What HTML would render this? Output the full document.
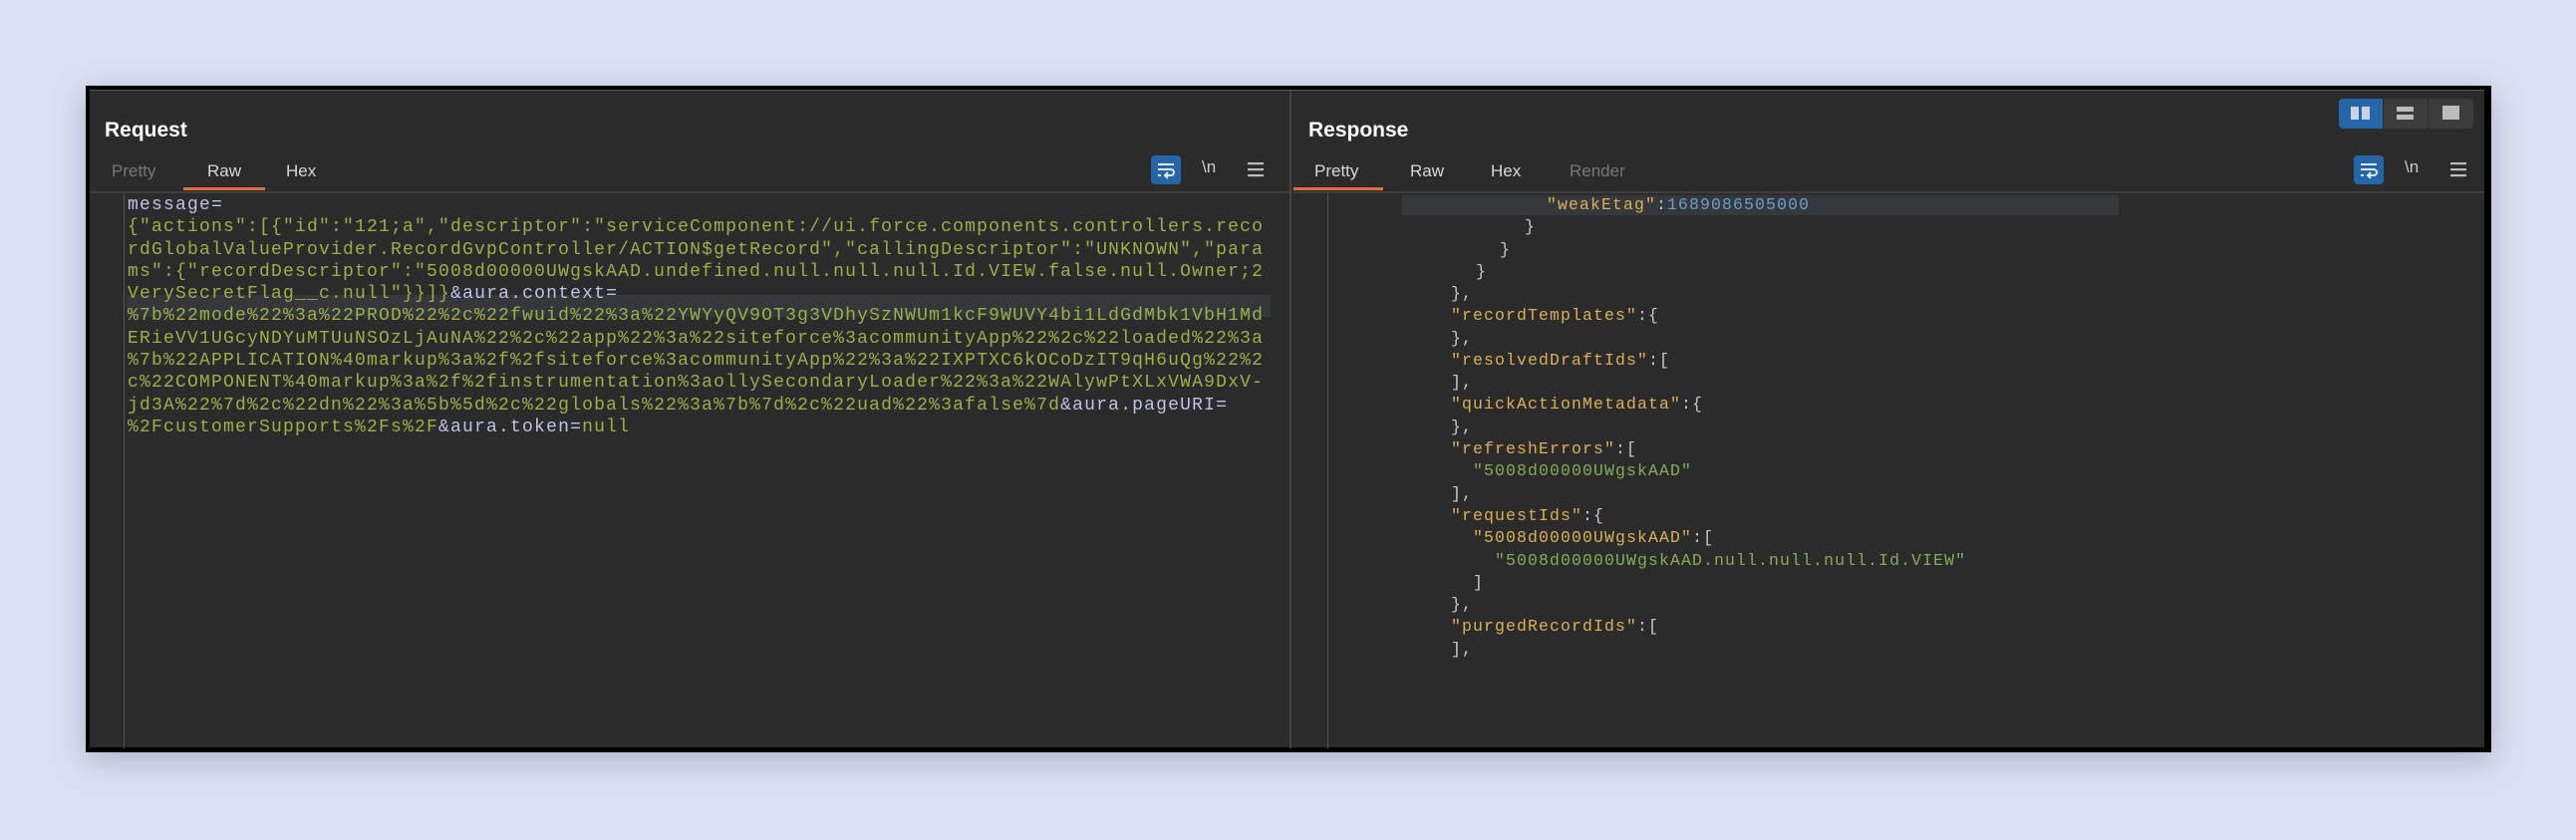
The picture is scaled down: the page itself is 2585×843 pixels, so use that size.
<!DOCTYPE html>
<html><head><meta charset="utf-8"><style>
*{margin:0;padding:0;box-sizing:border-box}
body{width:2585px;height:843px;background:#dce0f2;position:relative;overflow:hidden;font-family:"Liberation Sans",sans-serif}
#frame{position:absolute;left:86px;top:86px;width:2414px;height:669px;background:#000;box-shadow:0 8px 30px rgba(80,90,130,.35)}
#inner{position:absolute;left:4px;top:4px;width:2403px;height:660px;background:#2b2b2b;border-top:1px solid #555}
.abs{position:absolute}
.title{font-weight:bold;color:#fff;font-size:21px}
.tab{font-size:17px;color:#d8d8d8}
.dim{color:#777}
.code{position:absolute;white-space:pre;font-family:"Liberation Mono",monospace}
.req{font-size:18px;letter-spacing:1.2px;line-height:22.3px;color:#9fae48}
.lav{color:#bfc2e6}
.resp{font-size:16.5px;letter-spacing:1.1px;line-height:22.3px;color:#c8c8c8}
.k{color:#d9b055}.s{color:#82ad55}.n{color:#6a9fcf}
.btn{position:absolute;width:30px;height:29px;background:#2566a8;border-radius:4px}
</style></head><body>
<div id="frame"><div id="inner"></div></div>
<div class="abs title" style="left:105px;top:119px">Request</div>
<div class="abs tab dim" style="left:112px;top:162px">Pretty</div>
<div class="abs tab" style="left:208px;top:162px">Raw</div>
<div class="abs tab" style="left:287px;top:162px">Hex</div>
<div class="abs" style="left:184px;top:188px;width:82px;height:3px;background:#e0703a"></div>
<div class="abs" style="left:90px;top:192px;width:1204px;height:2px;background:#3d3d3d"></div>
<div class="abs" style="left:1298px;top:192px;width:1195px;height:2px;background:#3d3d3d"></div>
<div class="abs" style="left:1294px;top:91px;width:2px;height:660px;background:#444"></div>
<div class="abs" style="left:124px;top:194px;width:1px;height:557px;background:#555"></div>
<div class="abs" style="left:127px;top:296px;width:1148px;height:22px;background:#35383a"></div>
<div class="btn" style="left:1155px;top:156px"></div>
<svg class="abs" style="left:1155px;top:156px" width="30" height="29"><g stroke="#dfe8f5" stroke-width="2" fill="none"><line x1="7" y1="9" x2="23" y2="9"/><path d="M7 14h13a3 3 0 0 1 0 6h-5"/><path d="M17 17l-3 3 3 3"/><line x1="7" y1="20" x2="10" y2="20"/></g></svg>
<div class="abs" style="left:1206px;top:158px;color:#ccc;font-size:17px">\n</div>
<svg class="abs" style="left:1252px;top:162px" width="16" height="16"><g fill="#bbb"><rect y="1" width="16" height="2.2"/><rect y="7" width="16" height="2.2"/><rect y="13" width="16" height="2.2"/></g></svg>
<div class="code req" style="left:128px;top:195px"><span class="lav">message=</span>
{"actions":[{"id":"121;a","descriptor":"serviceComponent://ui.force.components.controllers.reco
rdGlobalValueProvider.RecordGvpController/ACTION$getRecord","callingDescriptor":"UNKNOWN","para
ms":{"recordDescriptor":"5008d00000UWgskAAD.undefined.null.null.null.Id.VIEW.false.null.Owner;2
VerySecretFlag__c.null"}}]}<span class="lav">&amp;aura.context=</span>
%7b%22mode%22%3a%22PROD%22%2c%22fwuid%22%3a%22YWYyQV9OT3g3VDhySzNWUm1kcF9WUVY4bi1LdGdMbk1VbH1Md
ERieVV1UGcyNDYuMTUuNSOzLjAuNA%22%2c%22app%22%3a%22siteforce%3acommunityApp%22%2c%22loaded%22%3a
%7b%22APPLICATION%40markup%3a%2f%2fsiteforce%3acommunityApp%22%3a%22IXPTXC6kOCoDzIT9qH6uQg%22%2
c%22COMPONENT%40markup%3a%2f%2finstrumentation%3aollySecondaryLoader%22%3a%22WAlywPtXLxVWA9DxV-
jd3A%22%7d%2c%22dn%22%3a%5b%5d%2c%22globals%22%3a%7b%7d%2c%22uad%22%3afalse%7d<span class="lav">&amp;aura.pageURI=</span>
%2FcustomerSupports%2Fs%2F<span class="lav">&amp;aura.token=</span>null</div>
<div class="abs title" style="left:1313px;top:119px">Response</div>
<div class="abs tab" style="left:1319px;top:162px">Pretty</div>
<div class="abs tab" style="left:1415px;top:162px">Raw</div>
<div class="abs tab" style="left:1496px;top:162px">Hex</div>
<div class="abs tab dim" style="left:1575px;top:162px">Render</div>
<div class="abs" style="left:1298px;top:188px;width:90px;height:3px;background:#e0703a"></div>
<div class="abs" style="left:1332px;top:194px;width:1px;height:557px;background:#555"></div>
<div class="abs" style="left:2347px;top:99px;width:135px;height:30px;background:#3c3c3c;border-radius:4px"></div>
<div class="abs" style="left:2347px;top:99px;width:44px;height:30px;background:#2566a8;border-radius:4px 0 0 4px"></div>
<div class="abs" style="left:2391px;top:99px;width:1px;height:30px;background:#2b2b2b"></div>
<div class="abs" style="left:2436px;top:99px;width:1px;height:30px;background:#2b2b2b"></div>
<div class="abs" style="left:2359px;top:107px;width:8px;height:13px;background:#c8d4e4"></div>
<div class="abs" style="left:2370px;top:107px;width:8px;height:13px;background:#c8d4e4"></div>
<div class="abs" style="left:2405px;top:107px;width:17px;height:5px;background:#bbb"></div>
<div class="abs" style="left:2405px;top:115px;width:17px;height:5px;background:#bbb"></div>
<div class="abs" style="left:2451px;top:106px;width:17px;height:14px;background:#bbb"></div>
<div class="btn" style="left:2362px;top:156px"></div>
<svg class="abs" style="left:2362px;top:156px" width="30" height="29"><g stroke="#dfe8f5" stroke-width="2" fill="none"><line x1="7" y1="9" x2="23" y2="9"/><path d="M7 14h13a3 3 0 0 1 0 6h-5"/><path d="M17 17l-3 3 3 3"/><line x1="7" y1="20" x2="10" y2="20"/></g></svg>
<div class="abs" style="left:2413px;top:158px;color:#ccc;font-size:17px">\n</div>
<svg class="abs" style="left:2459px;top:162px" width="16" height="16"><g fill="#bbb"><rect y="1" width="16" height="2.2"/><rect y="7" width="16" height="2.2"/><rect y="13" width="16" height="2.2"/></g></svg>
<div class="abs" style="left:1407px;top:196px;width:719px;height:20px;background:#35393c"></div>
<div class="code resp" style="left:1552px;top:195px"><span class="k">"weakEtag"</span>:<span class="n">1689086505000</span></div>
<div class="code resp" style="left:1530px;top:217px">}</div>
<div class="code resp" style="left:1505px;top:240px">}</div>
<div class="code resp" style="left:1481px;top:262px">}</div>
<div class="code resp" style="left:1456px;top:284px">},
<span class="k">"recordTemplates"</span>:{
},
<span class="k">"resolvedDraftIds"</span>:[
],
<span class="k">"quickActionMetadata"</span>:{
},
<span class="k">"refreshErrors"</span>:[
  <span class="s">"5008d00000UWgskAAD"</span>
],
<span class="k">"requestIds"</span>:{
  <span class="k">"5008d00000UWgskAAD"</span>:[
    <span class="s">"5008d00000UWgskAAD.null.null.null.Id.VIEW"</span>
  ]
},
<span class="k">"purgedRecordIds"</span>:[
],</div>
</body></html>
